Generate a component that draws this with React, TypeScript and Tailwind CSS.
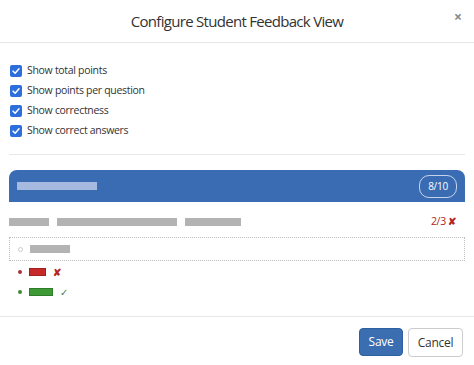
import React from "react";

const OPTIONS = [
  "Show total points",
  "Show points per question",
  "Show correctness",
  "Show correct answers",
];

function Check() {
  return (
    <span className="grid h-[12px] w-[12px] flex-none place-items-center rounded-[2px] bg-[#2c6fdc]">
      <svg viewBox="0 0 12 12" className="h-[10px] w-[10px]">
        <path d="M2.5 6.2 L5 8.6 L9.6 3.4" fill="none" stroke="white" strokeWidth="1.8" strokeLinecap="round" strokeLinejoin="round" />
      </svg>
    </span>
  );
}

export default function App() {
  return (
    <div className="flex h-[365px] w-[474px] flex-col bg-white font-['Open_Sans',sans-serif] text-[#333]">
      {/* Header */}
      <div className="relative flex h-[43px] flex-none items-center justify-center border-b border-[#e5e5e5]">
        <h1 className="text-[15px] leading-none tracking-[-0.7px]">Configure Student Feedback View</h1>
        <button className="absolute right-[12px] top-[10px] text-[14px] font-bold leading-none text-[#888]">×</button>
      </div>

      {/* Body */}
      <div className="flex-1 px-[9px] pt-[18px]">
        <div>
          {OPTIONS.map((o) => (
            <label key={o} className="flex h-[20px] items-center gap-[5px] pl-[1px] text-[10.5px] tracking-[-0.3px]">
              <Check />
              <span>{o}</span>
            </label>
          ))}
        </div>

        <div className="mt-[13px] border-t border-[#e8e8e8]" />

        {/* Preview */}
        <div className="mt-[15px] flex h-[32px] items-center justify-between rounded-t-[8px] bg-[#3a6cb4] pl-[8px] pr-[8px]">
          <div className="h-[8px] w-[80px] bg-[#a6b9de]" />
          <span className="flex h-[23px] w-[38px] items-center justify-center rounded-[10px] border border-white/70 text-[10px] tracking-[-0.3px] text-white">
            8/10
          </span>
        </div>

        <div className="mt-[12px] flex h-[16px] items-center justify-between pr-[9px]">
          <div className="flex gap-[8px]">
            <div className="h-[8px] w-[40px] bg-[#b3b3b3]" />
            <div className="h-[8px] w-[120px] bg-[#b3b3b3]" />
            <div className="h-[8px] w-[56px] bg-[#b3b3b3]" />
          </div>
          <span className="text-[10.5px] tracking-[-0.3px] text-[#b3261e]">
            2/3 <span className="text-[10px] font-bold">✘</span>
          </span>
        </div>

        <div className="mt-[7px] flex h-[24px] items-center gap-[7px] border border-dotted border-[#bdbdbd] pl-[8px]">
          <span className="h-[5px] w-[5px] rounded-full border border-[#ccc]" />
          <div className="h-[8px] w-[40px] bg-[#b3b3b3]" />
        </div>

        <div className="mt-[1px] flex h-[20px] items-center pl-[9px]">
          <span className="h-[4px] w-[4px] rounded-full bg-[#a8323a]" />
          <div className="ml-[7px] h-[8px] w-[17px] border border-[#a51f1f] bg-[#c62828]" />
          <span className="ml-[7px] text-[10px] font-bold leading-none text-[#b3261e]">✘</span>
        </div>
        <div className="flex h-[20px] items-center pl-[9px]">
          <span className="h-[4px] w-[4px] rounded-full bg-[#3f8a3a]" />
          <div className="ml-[7px] h-[8px] w-[24px] border border-[#2f7d2a] bg-[#3d9a35]" />
          <span className="ml-[7px] text-[10px] leading-none text-[#4f7a4a]">✓</span>
        </div>
      </div>

      {/* Footer */}
      <div className="flex h-[49px] flex-none items-start justify-end gap-[5px] border-t border-[#e8e8e8] pr-[11px] pt-[11px]">
        <button className="h-[28px] w-[44px] rounded-[4px] border border-[#2f5f9f] bg-[#3b6db1] text-[12px] tracking-[-0.3px] text-white">
          Save
        </button>
        <button className="h-[29px] w-[55px] rounded-[4px] border border-[#ccc] bg-white text-[12px] tracking-[-0.3px] text-[#333]">
          Cancel
        </button>
      </div>
    </div>
  );
}
